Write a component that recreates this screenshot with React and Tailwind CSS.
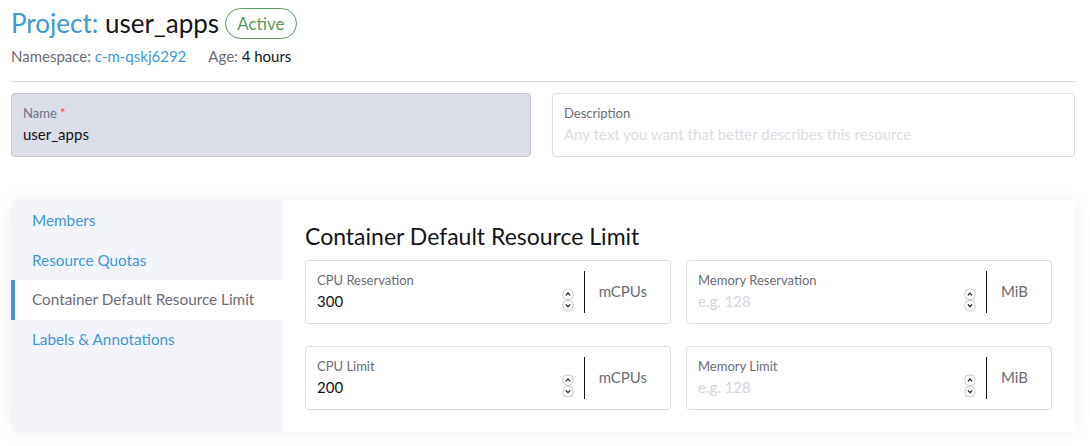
import React from 'react';

const Spinner = () => (
  <svg width="12" height="24" viewBox="0 0 12 24" className="shrink-0">
    <rect x="1" y="1" width="10" height="10.5" rx="4" fill="none" stroke="#c9c9cf" strokeWidth="1" />
    <rect x="1" y="12.5" width="10" height="10.5" rx="4" fill="none" stroke="#c9c9cf" strokeWidth="1" />
    <path d="M3.8 7.4 L6 5.2 L8.2 7.4" fill="none" stroke="#141419" strokeWidth="1.2" />
    <path d="M3.8 16.4 L6 18.6 L8.2 16.4" fill="none" stroke="#141419" strokeWidth="1.2" />
  </svg>
);

const UnitInput = ({ label, value, placeholder, unit }) => (
  <div className="flex h-[64px] flex-1 items-center rounded border border-[#dcdee7] bg-white pl-[11px]">
    <div className="flex flex-1 flex-col">
      <span className="text-[13px] leading-[18px] text-[#6c6c76]">{label}</span>
      <span className={`text-[15px] leading-[24px] ${value ? 'text-[#141419]' : 'text-[#d5d6de]'}`}>
        {value || placeholder}
      </span>
    </div>
    <div className="mt-[16px] mr-[10px]">
      <Spinner />
    </div>
    <div className="h-[42px] w-px bg-[#141419]" />
    <div className="flex items-center pl-[14px] pr-[23px] pb-[2px] text-[15px] text-[#6c6c76]">
      {unit}
    </div>
  </div>
);

const tabs = ['Members', 'Resource Quotas', 'Container Default Resource Limit', 'Labels & Annotations'];

export default function App() {
  return (
    <div className="h-[446px] w-[1090px] overflow-hidden bg-white px-[11px] font-['Lato','Noto_Sans',sans-serif]">
      <div className="w-[1064px]">
        <div className="flex items-center gap-[6px] pt-[6px]">
          <h1 className="text-[26px] leading-[34px] text-[#141419]">
            <span className="text-[#3d98d3]">Project:</span> user_apps
          </h1>
          <span className="rounded-full border border-[#5d995d] px-[11px] text-[17px] leading-[29px] text-[#5d995d]">
            Active
          </span>
        </div>
        <div className="mt-[6px] flex gap-[22px] text-[15px] leading-[20px] text-[#6c6c76]">
          <span>
            Namespace: <span className="text-[#3d98d3]">c-m-qskj6292</span>
          </span>
          <span>
            Age: <span className="text-[#141419]">4 hours</span>
          </span>
        </div>
        <div className="mt-[15px] h-px bg-[#dcdee7]" />

        <div className="mt-[11px] flex gap-[21px]">
          <div className="flex h-[64px] w-[520px] flex-col justify-center rounded border border-[#c7c9d4] bg-[#dcdee7] px-[11px]">
            <span className="text-[13px] leading-[18px] text-[#6c6f8a]">
              Name <span className="text-[#f64747]">*</span>
            </span>
            <span className="text-[15px] leading-[24px] text-[#141419]">user_apps</span>
          </div>
          <div className="flex h-[64px] flex-1 flex-col justify-center rounded border border-[#dcdee7] bg-white px-[11px]">
            <span className="text-[13px] leading-[18px] text-[#6c6c76]">Description</span>
            <span className="text-[15px] leading-[24px] text-[#dcdee7]">
              Any text you want that better describes this resource
            </span>
          </div>
        </div>

        <div className="mt-[43px] flex h-[232px] rounded shadow-[0_0_20px_rgba(0,0,0,0.06)]">
          <div className="flex w-[272px] flex-col rounded-l bg-[#f4f5fa] pt-[1px]">
            {tabs.map((t, i) => (
              <div
                key={t}
                className={`flex h-[39.5px] items-center text-[15.3px] ${
                  i === 2
                    ? 'border-l-4 border-[#3d98d3] bg-white pl-[17px] text-[#6c6c76]'
                    : 'pl-[21px] text-[#3d98d3]'
                }`}
              >
                {t}
              </div>
            ))}
          </div>
          <div className="flex flex-1 flex-col bg-white px-[22px] pr-[23px]">
            <h2 className="pt-[21px] text-[23px] leading-[30px] text-[#141419]">Container Default Resource Limit</h2>
            <div className="mt-[9px] grid grid-cols-2 gap-x-[15px] gap-y-[22px]">
              <UnitInput label="CPU Reservation" value="300" unit="mCPUs" />
              <UnitInput label="Memory Reservation" placeholder="e.g. 128" unit="MiB" />
              <UnitInput label="CPU Limit" value="200" unit="mCPUs" />
              <UnitInput label="Memory Limit" placeholder="e.g. 128" unit="MiB" />
            </div>
          </div>
        </div>
      </div>
    </div>
  );
}
